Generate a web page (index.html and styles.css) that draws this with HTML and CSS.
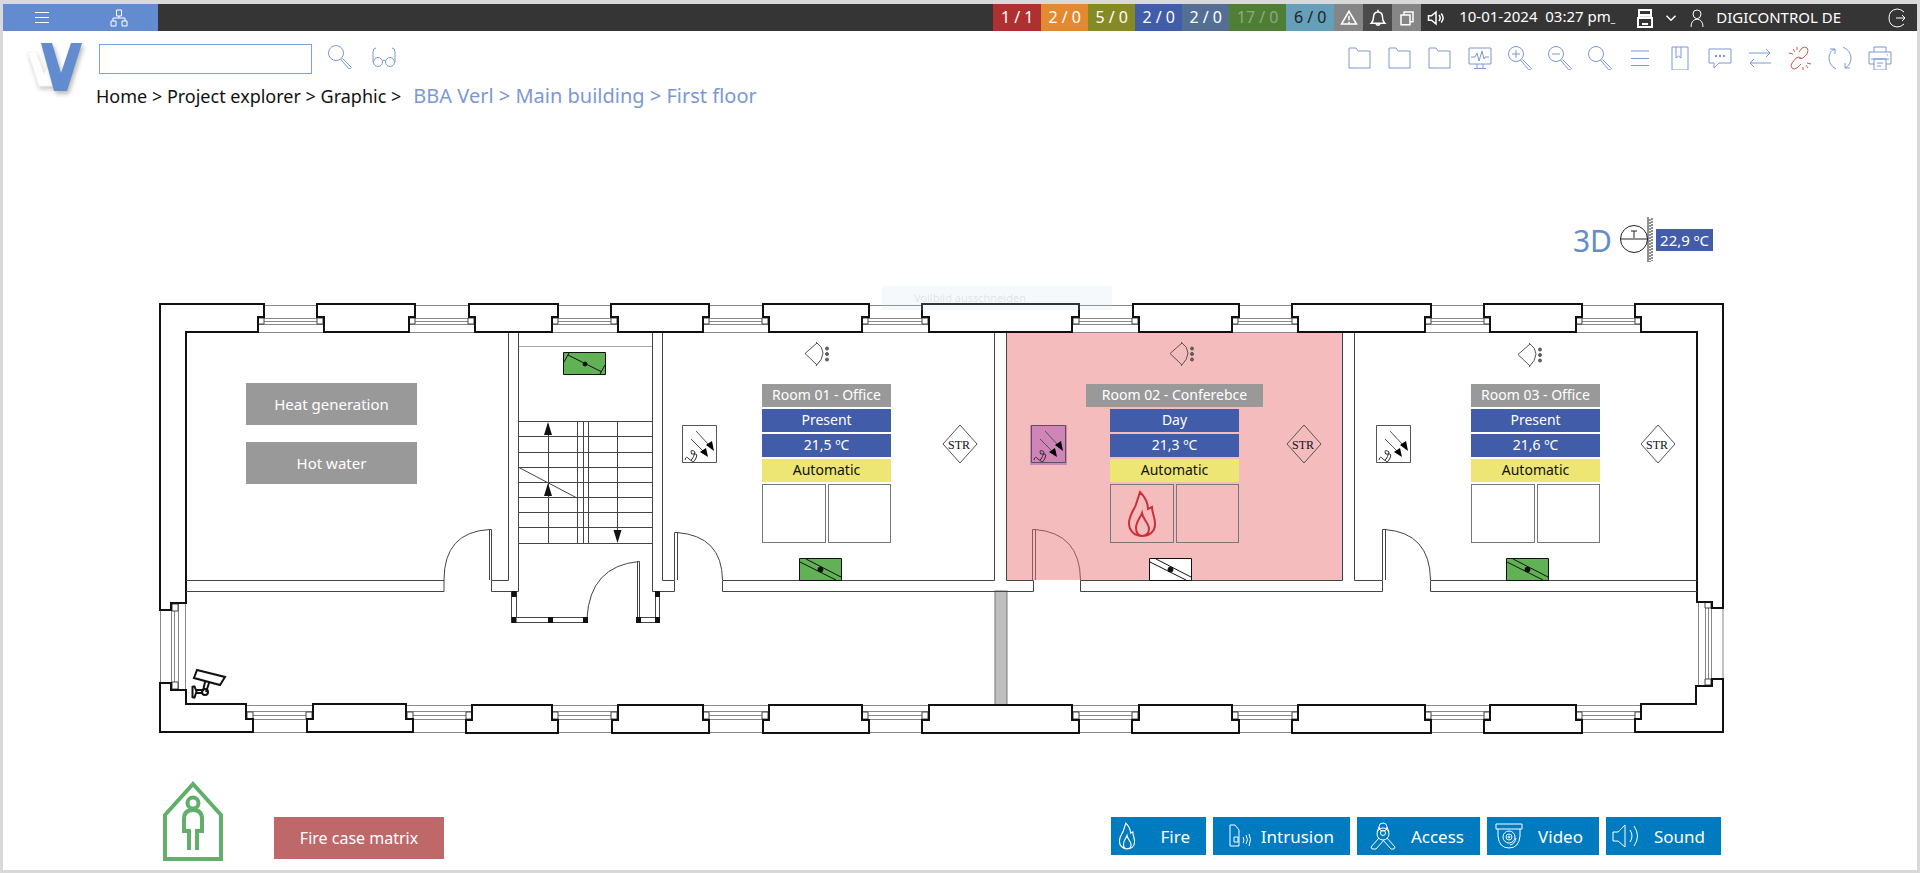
FILE: index.html
```html
<!DOCTYPE html>
<html lang="en">
<head>
<meta charset="utf-8">
<title>First floor</title>
<link rel="stylesheet" href="styles.css">
</head>
<body>
<svg class="sprite" aria-hidden="true">
  <symbol id="i-folder" viewBox="0 0 24 24"><path d="M1 22V2h7l2 3h12v17z"/></symbol>
  <symbol id="i-monitor" viewBox="0 0 24 24"><path d="M1 2h22v16H1zM9 18v4M15 18v4M6 22.500h12M3 11h4l2-4 2 8 3-10 2 8 1-2h4"/></symbol>
  <symbol id="i-zoom" viewBox="0 0 24 24"><circle cx="8" cy="8" r="7.500"/><path d="M12.500 14l8 9.500q2 1 3-1l-9-9"/></symbol>
  <symbol id="i-lines" viewBox="0 0 24 24"><path d="M3 5h18M3 12.500h18M3 19.500h18"/></symbol>
  <symbol id="i-book" viewBox="0 0 24 24"><path d="M4 1h16v23H4zM8 1v11l2.500-2 2.500 2V1"/></symbol>
  <symbol id="i-chat" viewBox="0 0 24 24"><path d="M1 3h22v14H11l-5 5v-5H1z"/><path stroke-width="2" d="M7 10h2M11 10h2M15 10h2"/></symbol>
  <symbol id="i-swap" viewBox="0 0 24 24"><path d="M1 7h21M18 3l4 4-4 4M23 17H2M6 13l-4 4 4 4"/></symbol>
  <symbol id="i-unlink" viewBox="0 0 24 24"><path d="M11 6l3-4q3-2 5 0t0 6l-4 4q-2 1-4 0M13 18l-4 4q-3 2-5 0t0-5l4-5q3-2 5 0M5 3l2 3M1 7l4 1M9 1v3M20 22l-2-3M23 18l-4-1M15 24v-3"/></symbol>
  <symbol id="i-cycle" viewBox="0 0 24 24"><path d="M8 23Q1 19 1 12T7 3M2 3h5v5M15 1q8 4 8 11t-6 10M22 22h-5v-5"/></symbol>
  <symbol id="i-printer" viewBox="0 0 24 24"><path d="M6 6V1h12v5M6 18H1V6h22v12h-5M6 13h12v11H6zM3 13h18M9 17h6M9 20h4M19 9h1"/></symbol>
  <symbol id="i-flame" viewBox="0 0 28 48"><path d="M12 2c5 5 8 11 8 17l4-2c0 6 3 10 3 17 0 8-6 12-13 12S1 41 1 33c0-6 3-11 6-16 2-5 3-9 5-15zM14 23c-2 5-6 9-6 15 0 5 3 8 6 8s7-2 7-7c0-6-6-9-7-16z"/></symbol>
  <symbol id="s-pir" viewBox="0 0 26 26"><path d="M13 2L1 12.500 13 24M12 1q14 10 0 24"/><g fill="#666"><circle cx="23" cy="7.500" r="1.500"/><circle cx="23" cy="13" r="1.500"/><circle cx="23" cy="18.500" r="1.500"/></g></symbol>
  <symbol id="s-temp" viewBox="0 0 35 38"><path d="M.5.500h34v37H.5zM14 6l13 14M9 14l12 12"/><path stroke="#333" d="M3 35q1-5 4-1t6-7q-4-3-4 0t3 2q5-1 1 6-2 4-4 0"/><path fill="#000" stroke="none" d="M24 20l6-4 2 10zM18 27l6-4 2 9z"/></symbol>
  <symbol id="s-str" viewBox="0 0 36 40"><path d="M18 1l17 19-17 19L1 20z"/></symbol>
  <symbol id="s-damper" viewBox="0 0 43 23"><path d="M.5.500h42v22H.5z"/><path fill="none" d="M1 4l36 18M7 1l35 18"/><circle cx="21.500" cy="11.500" r="2.500" fill="#111"/></symbol>
</svg>

<div class="frame">
  <div class="topbar">
    <nav class="tabs" aria-label="Views">
      <button class="tab" type="button" aria-label="Menu"><svg class="ico" viewBox="0 0 24 24"><path d="M5 6.500h14M5 11.500h14M5 16.500h14"/></svg></button>
      <button class="tab" type="button" aria-label="Structure"><svg class="ico" viewBox="0 0 24 24"><path d="M9.500 4h5v6h-5zM12 10v2M6 15v-3h12v3M4 15h5v5H4zM15 15h5v5h-5z"/></svg></button>
    </nav>
    <div class="status">
      <span class="count red">1 / 1</span><span class="count orange">2 / 0</span><span class="count olive">5 / 0</span><span class="count blue">2 / 0</span><span class="count steel">2 / 0</span><span class="count green">17 / 0</span><span class="count cyan">6 / 0</span>
      <button class="flag light" type="button" aria-label="Warnings"><svg class="ico small" viewBox="0 0 24 24"><path d="M12 3L2 20h20zM12 9v6M12 17v2"/></svg></button>
      <button class="flag dark" type="button" aria-label="Alarms"><svg class="ico small" viewBox="0 0 24 24"><path d="M3 19q3-3 3-8 0-7 6-7t6 7q0 5 3 8zM9 19q3 5 6 0M12 4V1"/></svg></button>
      <button class="flag light" type="button" aria-label="Windows"><svg class="ico small" viewBox="0 0 24 24"><path d="M4 8h12v13H4zM8 8V4h12v13h-4"/></svg></button>
      <button class="flag" type="button" aria-label="Sound"><svg class="ico small" viewBox="0 0 24 24"><path d="M2 9h4l6-5v16l-6-5H2zM16 8q3 4 0 8M19 6q5 6 0 12"/></svg></button>
      <time class="clock">10-01-2024&nbsp; 03:27 pm<small>_</small></time>
      <svg class="ico station" viewBox="0 0 24 24"><path fill="#ddd" d="M6 9h12v3H6z"/><path d="M6 4h12v8H6zM5 12h14v9H5zM9 18h6"/></svg>
      <svg class="ico chevron" viewBox="0 0 24 24"><path d="M6 9l6 6 6-6"/></svg>
      <svg class="ico" viewBox="0 0 24 24"><path d="M12 4q4 0 4 4t-4 5q-4-1-4-5t4-4zM6 21q0-7 6-8 6 1 6 8"/></svg>
      <span class="user">DIGICONTROL DE</span>
      <button class="flag exit" type="button" aria-label="Log out"><svg class="ico" viewBox="0 0 24 24"><path d="M18 6q-3-3-7-3-8 1-8 9t8 9q4 0 7-3M10 12h9M16 9l3 3-3 3"/></svg></button>
    </div>
  </div>

  <header class="header">
    <svg class="logo" viewBox="0 0 60 60" aria-label="Logo"><path class="ghost" d="M1 10h8l8 22 5-12 6 24h-16z"/><path class="vee" d="M14 1h11l9 30 10-30h11L40 49H27z"/></svg>
    <div class="lead">
      <div class="search">
        <input type="search" aria-label="Search">
        <button class="tool" type="button" aria-label="Find"><svg class="ico"><use href="#i-zoom"/></svg></button>
        <button class="tool" type="button" aria-label="View"><svg class="ico" viewBox="0 0 24 24"><circle cx="6" cy="17" r="4.500"/><circle cx="18" cy="17" r="4.500"/><path d="M10.500 16q1.500-2 3 0M1 17V7q0-4 3-4M23 17V7q0-4-3-4"/></svg></button>
      </div>
      <nav class="crumbs" aria-label="Breadcrumb">
        <span class="path"><a href="#home">Home</a> &gt; <a href="#projects">Project explorer</a> &gt; <a href="#graphic">Graphic</a> &gt;</span>
        <span class="place"><a href="#verl">BBA Verl</a> &gt; <a href="#main">Main building</a> &gt; <a href="#floor">First floor</a></span>
      </nav>
    </div>
    <div class="tools">
      <button class="tool" type="button" aria-label="Folder 1"><svg class="ico"><use href="#i-folder"/></svg></button>
      <button class="tool" type="button" aria-label="Folder 2"><svg class="ico"><use href="#i-folder"/></svg></button>
      <button class="tool" type="button" aria-label="Folder 3"><svg class="ico"><use href="#i-folder"/></svg></button>
      <button class="tool" type="button" aria-label="Trend"><svg class="ico"><use href="#i-monitor"/></svg></button>
      <button class="tool" type="button" aria-label="Zoom in"><svg class="ico" viewBox="0 0 24 24"><use href="#i-zoom"/><path d="M4 8h8M8 4v8"/></svg></button>
      <button class="tool" type="button" aria-label="Zoom out"><svg class="ico" viewBox="0 0 24 24"><use href="#i-zoom"/><path d="M4 8h8"/></svg></button>
      <button class="tool" type="button" aria-label="Zoom"><svg class="ico"><use href="#i-zoom"/></svg></button>
      <button class="tool" type="button" aria-label="List"><svg class="ico"><use href="#i-lines"/></svg></button>
      <button class="tool" type="button" aria-label="Book"><svg class="ico"><use href="#i-book"/></svg></button>
      <button class="tool" type="button" aria-label="Comment"><svg class="ico"><use href="#i-chat"/></svg></button>
      <button class="tool" type="button" aria-label="Swap"><svg class="ico"><use href="#i-swap"/></svg></button>
      <button class="tool danger" type="button" aria-label="Unlink"><svg class="ico"><use href="#i-unlink"/></svg></button>
      <button class="tool" type="button" aria-label="Refresh"><svg class="ico"><use href="#i-cycle"/></svg></button>
      <button class="tool" type="button" aria-label="Print"><svg class="ico"><use href="#i-printer"/></svg></button>
    </div>
  </header>

  <main class="canvas">
    <div class="outdoor">
      <a class="three" href="#3d">3D</a>
      <svg class="probe" viewBox="0 0 34 46"><circle cx="14" cy="22" r="13.500"/><path d="M0 22h28M11 14h6M14 14v7M28 0v45"/><path stroke-dasharray="2 1" d="M30 2v43M32 1v43"/></svg>
      <span class="degrees">22,9 ºC</span>
    </div>

    <div class="plan">
      <svg class="floor" viewBox="158 300 1566 436" role="img" aria-label="Floor plan, first floor">
        <rect x="1006" y="332" width="337" height="248" fill="#f4bcbc" stroke="none"/>
        <rect x="995" y="591" width="12" height="114" fill="#bfbfbf" stroke="#777"/>
        <g class="glass">
          <path d="M258 305.500H1641M258 318.500H1641M258 321.500H1641M258 324.500H1641M258 332.500H1641"/>
          <path d="M246 705.500H1641M246 711.500H1641M246 715.500H1641M246 719.500H1641M246 732.500H1641"/>
          <path d="M160.500 610V683M171.500 604V690M174.500 604V690M178.500 604V690M185.500 604V690"/>
          <path d="M1698.500 602V686M1705.500 602V686M1708.500 602V686M1711.500 602V686M1723 608V679"/>
          <path class="jamb" d="M258 318h6v6h-6zM317 318h6v6h-6zM409 318h6v6h-6zM468 318h6v6h-6zM552 318h6v6h-6zM611 318h6v6h-6zM703 318h6v6h-6zM762 318h6v6h-6zM862 318h6v6h-6zM922 318h6v6h-6zM1073 318h6v6h-6zM1132 318h6v6h-6zM1232 318h6v6h-6zM1292 318h6v6h-6zM1425 318h6v6h-6zM1484 318h6v6h-6zM1576 318h6v6h-6zM1635 318h6v6h-6z"/>
          <path class="jamb" d="M247 712h6v7h-6zM306 712h6v7h-6zM407 712h6v7h-6zM466 712h6v7h-6zM552 712h6v7h-6zM611 712h6v7h-6zM703 712h6v7h-6zM762 712h6v7h-6zM862 712h6v7h-6zM922 712h6v7h-6zM1073 712h6v7h-6zM1132 712h6v7h-6zM1232 712h6v7h-6zM1292 712h6v7h-6zM1425 712h6v7h-6zM1484 712h6v7h-6zM1576 712h6v7h-6zM1635 712h6v7h-6z"/>
          <path class="jamb" d="M172 604h6v7h-6zM172 682h6v7h-6zM1705 602h6v6h-6zM1705 679h6v6h-6z"/>
        </g>
        <g class="wall">
          <path d="M160 304H264V317H258V332H186V603H171V610H160z"/>
          <path d="M317 304H415V317H409V332H324V317H317z"/>
          <path d="M469 304H558V317H552V332H475V317H469z"/>
          <path d="M611 304H709V317H703V332H618V317H611z"/>
          <path d="M763 304H869V317H862V332H769V317H763z"/>
          <path d="M922 304H1079V317H1072V332H929V317H922z"/>
          <path d="M1133 304H1239V317H1232V332H1139V317H1133z"/>
          <path d="M1292 304H1431V317H1425V332H1298V317H1292z"/>
          <path d="M1484 304H1582V317H1576V332H1490V317H1484z"/>
          <path d="M1635 304H1723V608H1712V602H1697V332H1641V317H1635z"/>
          <path d="M160 683H171V690H186V704H246V719H253V732H160z"/>
          <path d="M313 704H406V719H413V732H307V719H313z"/>
          <path d="M472 705H552V720H558V733H466V720H472z"/>
          <path d="M618 705H703V720H709V733H612V720H618z"/>
          <path d="M769 705H862V720H869V733H763V720H769z"/>
          <path d="M929 705H1072V720H1079V733H922V720H929z"/>
          <path d="M1139 705H1232V720H1239V733H1132V720H1139z"/>
          <path d="M1298 705H1425V720H1431V733H1292V720H1298z"/>
          <path d="M1490 705H1576V720H1582V733H1484V720H1490z"/>
          <path d="M1641 704H1696V686H1712V679H1723V732H1635V719H1641z"/>
        </g>
        <g class="thin">
          <path d="M186 580.500H444M186 591.500H444V580"/>
          <path d="M508.500 333V580.500H491.500V591.500H518.500V333M489.500 580V529.500H491.500V580M489.500 529.500Q444 532 444 580"/>
          <path d="M652.500 333V591.500H674.500V580.500H662.500V333M674.500 580V532.500H677.500V580M677 532.500Q722 536 722.500 580"/>
          <path d="M994.500 333V580.500H722.500V591.500H1033.500V580.500H1006.500V333"/>
          <path d="M1342.500 333V580.500H1080.500V591.500H1382.500V580.500H1354.500V333"/>
          <path d="M1697 580.500H1430.500V591.500H1697M1382.500 580V529.500H1385.500V580M1385 529.500Q1430 533 1430.500 580"/>
          <path stroke="#8c5c5c" d="M1032.500 580V529.500H1035.500V580M1035 529.500Q1080 533 1080.500 580"/>
          <path stroke="#aaa" d="M519 346.500H652"/>
          <path d="M519 421.500H652M519 436.500H652M519 452.500H652M519 467.500H652M519 482.500H652M519 497.500H652M519 512.500H652M519 527.500H652M519 543.500H652M577.500 421V543M583.500 421V543M588.500 421V543M518 467L577 498M548.500 424V543M617.500 421V541"/>
          <path fill="#111" stroke="none" d="M548 422l4 13h-8zM548 483l4 13h-8zM617.500 543l-4-13h8z"/>
          <path d="M511.500 591V622.500H587M516.500 591V617.500H587M655.500 591V617.500H637M659.500 591V622.500H637M637.500 618V561.500H639.500V618M639 561.500Q590 566 587 618"/>
          <path fill="#111" stroke="none" d="M511.500 591h5v6h-5zM511.500 617h5v6h-5zM548 617h5v6h-5zM583 617h5v6h-5zM636 617h5v6h-5zM655 617h5v6h-5zM655 591h5v6h-5z"/>
        </g>
        <g class="sensor">
          <use href="#s-pir" x="804" y="341" width="26" height="26"/>
          <use href="#s-pir" x="1169" y="341" width="26" height="26"/>
          <use href="#s-pir" x="1517" y="342" width="26" height="26"/>
          <rect x="1030" y="425" width="37" height="40" fill="#cf85b8" stroke="none"/>
          <use href="#s-temp" x="682" y="425" width="35" height="38"/>
          <use href="#s-temp" x="1031" y="425" width="35" height="38"/>
          <use href="#s-temp" x="1376" y="425" width="35" height="38"/>
          <use href="#s-str" x="942" y="424" width="36" height="40"/>
          <use href="#s-str" x="1286" y="424" width="36" height="40"/>
          <use href="#s-str" x="1640" y="424" width="36" height="40"/>
          <text x="959" y="449">STR</text>
          <text x="1303" y="449">STR</text>
          <text x="1657" y="449">STR</text>
        </g>
        <g class="damper">
          <path d="M563.500 352.500h42v22h-42zM568 355l34 17M564 362l5-9M600 374l5-9"/><circle cx="585" cy="364" r="2" fill="#111"/>
          <use href="#s-damper" x="799" y="558" width="43" height="23"/>
          <use class="idle" href="#s-damper" x="1149" y="558" width="43" height="23"/>
          <use href="#s-damper" x="1506" y="558" width="43" height="23"/>
        </g>
        <path class="camera" d="M197 670l28 7-5 8-26-7zM205 682l-2 9M209 683l-3 9M192.500 686v12M192.500 686.500h2l2 5-2 6h-2M196 690h6M196 693h6"/>
        <circle class="camera" cx="205" cy="692" r="3"/>
      </svg>

      <button class="pin plate heat" type="button">Heat generation</button>
      <button class="pin plate water" type="button">Hot water</button>
      <div class="pin hint">Vollbild ausschneiden</div>

      <section class="pin room one">
        <h2 class="cell name">Room 01 - Office</h2>
        <span class="cell value">Present</span>
        <span class="cell value">21,5 ºC</span>
        <span class="cell mode">Automatic</span>
        <div class="slots"><span class="slot"></span><span class="slot"></span></div>
      </section>
      <section class="pin room two">
        <h2 class="cell name wide">Room 02 - Conferebce</h2>
        <span class="cell value">Day</span>
        <span class="cell value">21,3 ºC</span>
        <span class="cell mode">Automatic</span>
        <div class="slots"><span class="slot"><svg class="fire"><use href="#i-flame"/></svg></span><span class="slot"></span></div>
      </section>
      <section class="pin room three-office">
        <h2 class="cell name">Room 03 - Office</h2>
        <span class="cell value">Present</span>
        <span class="cell value">21,6 ºC</span>
        <span class="cell mode">Automatic</span>
        <div class="slots"><span class="slot"></span><span class="slot"></span></div>
      </section>
    </div>

    <footer class="footer">
      <svg class="house" viewBox="0 0 60 80" aria-label="Occupied"><path d="M30 3l28 31v44H2V34z"/><circle cx="30" cy="22" r="5.500"/><path d="M26 69V50h-5V38q0-9 9-9t9 9v12h-5v19"/></svg>
      <button class="matrix" type="button">Fire case matrix</button>
      <div class="actions">
        <button class="action fire-action" type="button"><svg class="glyph" viewBox="0 0 28 48"><use href="#i-flame"/></svg>Fire</button>
        <button class="action intrusion" type="button"><svg class="glyph" viewBox="0 0 28 28"><path d="M5 3h5l4 5v16H5zM9 15h4v5H9zM18 15q2 3 0 6M21 13q3 5 0 9M24 12q3 5 0 12"/></svg>Intrusion</button>
        <button class="action access" type="button"><svg class="glyph" viewBox="0 0 28 28"><circle cx="14" cy="5" r="4"/><circle cx="14" cy="12" r="6"/><circle cx="14" cy="11" r="2.500"/><path d="M10 16L2 25l1 2h4l8-9M18 16l8 9-1 2h-3l-8-9M8 10l2-5M20 10l-2-5"/></svg>Access</button>
        <button class="action video" type="button"><svg class="glyph" viewBox="0 0 28 28"><path d="M1 2h26v5H1zM3 7v7q1 12 11 12t11-12V7"/><circle cx="14" cy="15" r="6"/><circle cx="14" cy="15" r="3"/><circle cx="14" cy="15" r="1"/><path d="M21 16q-1 6-6 7"/></svg>Video</button>
        <button class="action sound" type="button"><svg class="glyph" viewBox="0 0 28 28"><path d="M1 10h5l7-7v22l-7-6H1zM18 8q4 6 0 12M22 4q7 10 0 20"/></svg>Sound</button>
      </div>
    </footer>
  </main>
</div>
</body>
</html>
```
FILE: styles.css
```css
* { box-sizing: border-box; }
body {
  margin: 0;
  font-family: "Noto Sans", "Open Sans", sans-serif;
  font-size: 16px;
  color: #111;
  background: #fff;
}
button {
  font: inherit;
  color: inherit;
  border: 0;
  padding: 0;
  background: none;
  cursor: pointer;
}
a { color: inherit; text-decoration: none; }
.sprite { position: absolute; width: 0; height: 0; }
.frame {
  min-height: 100vh;
  display: flex;
  flex-direction: column;
  border: 3px solid #d9d9d9;
  border-top-width: 4px;
}
.ico {
  width: 24px;
  height: 24px;
  flex: none;
  fill: none;
  stroke: currentColor;
  stroke-width: 1;
}
.ico.small { width: 18px; height: 18px; stroke-width: 2; }

.topbar {
  display: flex;
  justify-content: space-between;
  height: 27px;
  background: #353535;
  color: #fff;
}
.tabs { display: flex; width: 155px; background: #638cd0; }
.tab { flex: 1; display: grid; place-items: center; }
.status { display: flex; align-items: center; line-height: 27px; }
.count { width: 47px; text-align: center; }
.red { background: #b03032; width: 48px; }
.orange { background: #e38a31; }
.olive { background: #868a24; }
.blue { background: #415ca8; }
.steel { background: #556f94; }
.green { background: #4f7f35; color: #8fa886; width: 57px; }
.cyan { background: #659fba; color: #222; width: 48px; }
.flag { width: 29px; height: 27px; display: grid; place-items: center; }
.light { background: #868686; }
.dark { background: #4a4a4a; }
.clock { margin: 0 18px 0 9px; font-size: 15px; line-height: 24px; align-self: flex-start; }
.clock small { font-size: 10px; }
.station, .chevron { stroke-width: 2; }
.chevron { width: 18px; margin: 0 5px; }
.user { margin: 0 42px 0 7px; font-size: 15px; }
.exit { margin-right: 5px; }

.header {
  display: flex;
  align-items: flex-start;
  padding: 11px 25px 0 24px;
  color: #7b98d3;
}
.logo { width: 60px; height: 60px; margin-right: 9px; overflow: visible; }
.vee { fill: #638cd0; filter: drop-shadow(2px 3px 2px #bbb); }
.ghost { fill: #fff; stroke: #f4f4f4; filter: drop-shadow(1px 3px 2px #ccc); }
.lead { flex: 1; }
.search { display: flex; align-items: center; gap: 20px; padding: 2px 0 0 3px; }
.search input {
  width: 213px;
  height: 30px;
  border: 1px solid #7ba0dc;
  background: #fff;
  margin-right: -4px;
}
.tool { display: block; color: #7b98d3; }
.danger { color: #cf5a4b; }
.tools { display: flex; gap: 16px; padding: 4px 0; }
.crumbs { display: flex; align-items: baseline; gap: 12px; line-height: 26px; padding-top: 9px; }
.path { font-size: 18px; color: #111; }
.place { font-size: 20px; }

.canvas { padding: 108px 193px 0 155px; }
.outdoor { display: flex; align-items: center; justify-content: flex-end; padding-right: 11px; gap: 8px; height: 46px; }
.three { font-size: 30px; color: #638cd0; }
.probe { width: 34px; height: 46px; margin-right: -6px; fill: none; stroke: #222; }
.degrees {
  background: #415ca8;
  color: #fff;
  width: 57px;
  line-height: 22px;
  text-align: center;
  font-size: 15px;
  white-space: nowrap;
}

.plan { position: relative; margin-top: 37px; }
.floor { display: block; width: 100%; height: auto; fill: none; stroke: #222; }
.wall { fill: #fff; stroke: #111; stroke-width: 2; }
.glass { stroke: #888; }
.jamb { fill: #fff; stroke: #444; }
.thin { stroke: #444; }
.sensor { stroke: #555; }
.floor text {
  font-family: "Liberation Serif", serif;
  font-size: 12px;
  text-anchor: middle;
  fill: #112;
  stroke: none;
}
.damper { fill: #62b157; stroke: #111; }
.idle { fill: #fff; }
.camera { stroke: #111; stroke-width: 2; }

.pin {
  position: absolute;
  left: calc(100% * var(--x) / 1566);
  top: calc(100% * var(--y) / 436);
}
.plate {
  width: 171px;
  height: 42px;
  background: #999;
  color: #fff;
  font-size: 15px;
}
.heat { --x: 88; --y: 83; }
.water { --x: 88; --y: 142; }
.hint {
  --x: 724;
  --y: -14;
  width: 230px;
  line-height: 24px;
  padding-left: 32px;
  font-size: 11px;
  color: rgba(120, 120, 120, .18);
  background: rgba(200, 220, 240, .18);
}
.room {
  display: grid;
  grid-template-columns: 129px;
  gap: 2px;
}
.one { --x: 604; --y: 84; }
.two { --x: 952; --y: 84; }
.three-office { --x: 1313; --y: 84; }
.cell {
  height: 23px;
  margin: 0;
  line-height: 22px;
  font-size: 14px;
  font-weight: 400;
  text-align: center;
  color: #fff;
}
.name { background: #999; }
.wide { width: 177px; justify-self: center; }
.value { background: #415ca8; }
.mode { background: #ede675; color: #111; }
.slots { display: grid; grid-template-columns: 1fr 1fr; gap: 2px; }
.slot { height: 59px; border: 1px solid #777; display: grid; place-items: center; }
.fire { width: 28px; height: 48px; fill: none; stroke: #cc2f38; stroke-width: 2; }

.footer { display: flex; align-items: flex-end; padding: 45px 3px 6px 5px; }
.house { width: 60px; height: 80px; fill: none; stroke: #62ae6b; stroke-width: 4; }
.matrix {
  width: 170px;
  height: 42px;
  margin: 0 0 2px 51px;
  background: #bf6869;
  color: #fff;
}
.actions { display: flex; gap: 7px; margin: 0 0 6px auto; }
.action {
  display: flex;
  align-items: center;
  justify-content: space-between;
  height: 38px;
  padding: 0 16px 0 12px;
  background: #007bc0;
  color: #fff;
  font-size: 17px;
}
.glyph { width: 28px; height: 28px; fill: none; stroke: #fff; stroke-width: 1; }
.fire-action { width: 95px; padding-left: 2px; }
.fire-action .glyph { stroke-width: 2; }
.intrusion { width: 137px; }
.access { width: 123px; }
.video { width: 112px; padding-left: 8px; }
.sound { width: 115px; padding-left: 6px; }
```
